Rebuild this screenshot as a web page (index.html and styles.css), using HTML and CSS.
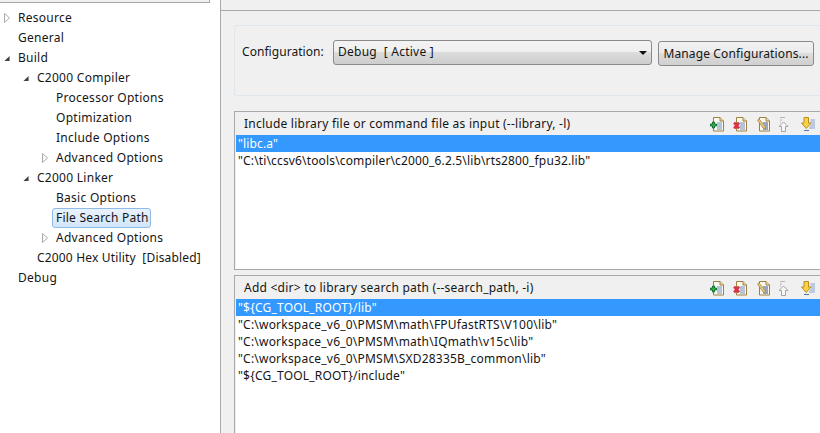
FILE: index.html
```html
<!DOCTYPE html>
<html lang="en">
<head>
<meta charset="utf-8">
<title>Build settings</title>
<link rel="stylesheet" href="styles.css">
</head>
<body>
<svg class="defs" width="0" height="0" aria-hidden="true">
  <symbol id="page" viewBox="0 0 15 15">
    <path d="M3.500.5H10L13.500 4V14H3.500Z" fill="#fbf9ee" stroke="#9c8040"/>
    <path d="M10 .5V4H13.500" fill="#eadcb0" stroke="#9c8040"/>
    <path d="M7 6H12M7 8H12M7 10H12M7 12H12" stroke="#6f8fc4"/>
  </symbol>
  <symbol id="add" viewBox="0 0 15 15">
    <use href="#page"/>
    <path d="M2.500 5H4.500V7H6.500V9H4.500V11H2.500V9H.5V7H2.500Z" fill="#35b04f" stroke="#0d6b2a" stroke-width=".9"/>
  </symbol>
  <symbol id="del" viewBox="0 0 15 15">
    <use href="#page"/>
    <path d="M.5 6.500L2 5L3.500 6.500L5 5L6.800 6.500L5.300 8.500L6.800 10.500L5 12L3.500 10.500L2 12L.5 10.500L2 8.500Z" fill="#e0304a" stroke="#cf2a3c" stroke-width=".5"/>
  </symbol>
  <symbol id="edit" viewBox="0 0 15 15">
    <path d="M2.500.5H9L12.500 4V14H2.500Z" fill="#fbf9ee" stroke="#9c8040"/>
    <path d="M9 .5V4H12.500" fill="#eadcb0" stroke="#9c8040"/>
    <path d="M6 6H11M7 8H11M8 10H11M6 12H11" stroke="#34558f"/>
    <path d="M.5 3L2 1.800L8 9.500L8.500 12L6 11Z" fill="#ecc87c" stroke="#a58a4e" stroke-width=".8"/>
  </symbol>
  <symbol id="up" viewBox="0 0 10 15">
    <path d="M4.500 5L9 9.500H6.500V14.500H2.500V9.500H0Z" fill="#f6f6f6" stroke="#a4a4a4"/>
    <path d="M1 .5H6M1 3H3M1 5H2" stroke="#b4b4b4"/>
  </symbol>
  <symbol id="down" viewBox="0 0 15 15">
    <path d="M3 .5H7.500V6H10L5.250 11.500L.5 6H3Z" fill="#fad24a" stroke="#bc8a1c"/>
    <path d="M9.500 3H14M9.500 5H14M10 7H14M9 9H14M8 11H14" stroke="#8aa2cc"/>
    <path d="M3 13.500H8" stroke="#4d75b5"/>
  </symbol>
</svg>

<div class="app">
  <nav class="tree">
    <div class="tree-top"></div>
    <ul class="rows">
      <li class="row"><svg class="twist" viewBox="0 0 6 10"><path d="M.5.5L5.500 5L.5 9.500Z" fill="#fff" stroke="#a9a9a9"/></svg><span class="label">Resource</span></li>
      <li class="row"><span class="twist"></span><span class="label">General</span></li>
      <li class="row"><svg class="twist open" viewBox="0 0 7 7"><path d="M6.500.5V6.500H.5Z" fill="#404040"/></svg><span class="label">Build</span></li>
      <li class="row l2"><svg class="twist open" viewBox="0 0 7 7"><path d="M6.500.5V6.500H.5Z" fill="#404040"/></svg><span class="label">C2000 Compiler</span></li>
      <li class="row l3"><span class="twist"></span><span class="label">Processor Options</span></li>
      <li class="row l3"><span class="twist"></span><span class="label">Optimization</span></li>
      <li class="row l3"><span class="twist"></span><span class="label">Include Options</span></li>
      <li class="row l3"><svg class="twist" viewBox="0 0 6 10"><path d="M.5.5L5.500 5L.5 9.500Z" fill="#fff" stroke="#a9a9a9"/></svg><span class="label">Advanced Options</span></li>
      <li class="row l2"><svg class="twist open" viewBox="0 0 7 7"><path d="M6.500.5V6.500H.5Z" fill="#404040"/></svg><span class="label">C2000 Linker</span></li>
      <li class="row l3"><span class="twist"></span><span class="label">Basic Options</span></li>
      <li class="row l3"><span class="twist"></span><span class="label selected">File Search Path</span></li>
      <li class="row l3"><svg class="twist" viewBox="0 0 6 10"><path d="M.5.5L5.500 5L.5 9.500Z" fill="#fff" stroke="#a9a9a9"/></svg><span class="label">Advanced Options</span></li>
      <li class="row l2"><span class="twist"></span><span class="label hex">C2000 Hex Utility&nbsp; [Disabled]</span></li>
      <li class="row"><span class="twist"></span><span class="label">Debug</span></li>
    </ul>
  </nav>

  <main class="content">
    <div class="top-strip"></div>
    <section class="config">
      <span class="config-label">Configuration:</span>
      <div class="combo"><span>Debug&nbsp; [ Active ]</span><span class="caret"></span></div>
      <button class="manage" type="button">Manage Configurations...</button>
    </section>

    <section class="panel first">
      <header class="panel-head">
        <span class="panel-title">Include library file or command file as input (--library, -l)</span>
        <div class="tools">
          <svg class="tool"><use href="#add"/></svg>
          <svg class="tool"><use href="#del"/></svg>
          <svg class="tool"><use href="#edit"/></svg>
          <svg class="tool narrow"><use href="#up"/></svg>
          <span class="sep"></span>
          <svg class="tool"><use href="#down"/></svg>
        </div>
      </header>
      <ul class="list">
        <li class="item active">"libc.a"</li>
        <li class="item">"C:\ti\ccsv6\tools\compiler\c2000_6.2.5\lib\rts2800_fpu32.lib"</li>
      </ul>
    </section>

    <section class="panel second">
      <header class="panel-head">
        <span class="panel-title">Add &lt;dir&gt; to library search path (--search_path, -i)</span>
        <div class="tools">
          <svg class="tool"><use href="#add"/></svg>
          <svg class="tool"><use href="#del"/></svg>
          <svg class="tool"><use href="#edit"/></svg>
          <svg class="tool narrow"><use href="#up"/></svg>
          <span class="sep"></span>
          <svg class="tool"><use href="#down"/></svg>
        </div>
      </header>
      <ul class="list wide">
        <li class="item active">"${CG_TOOL_ROOT}/lib"</li>
        <li class="item">"C:\workspace_v6_0\PMSM\math\FPUfastRTS\V100\lib"</li>
        <li class="item">"C:\workspace_v6_0\PMSM\math\IQmath\v15c\lib"</li>
        <li class="item">"C:\workspace_v6_0\PMSM\SXD28335B_common\lib"</li>
        <li class="item">"${CG_TOOL_ROOT}/include"</li>
      </ul>
    </section>
  </main>
</div>
</body>
</html>
```

FILE: styles.css
```css
* { box-sizing: border-box; }
html, body { margin: 0; padding: 0; }
body {
  width: 820px;
  height: 433px;
  overflow: hidden;
  font: 12px/16px "Noto Sans", sans-serif;
  color: #151515;
  background: #fff;
}
.defs { display: block; width: 0; height: 0; }
ul { list-style: none; margin: 0; padding: 0; }

.app { display: flex; width: 820px; height: 433px; }

/* Tree */
.tree {
  width: 221px;
  flex: none;
  background: #fff;
  border-right: 1px solid #a8a8a8;
}
.tree-top {
  width: 210px;
  height: 3px;
  background: #f0f0f0;
  border-right: 1px solid #a8a8a8;
  border-bottom: 1px solid #a8a8a8;
}
.rows { padding-top: 5px; }
.row { display: flex; align-items: center; height: 20px; padding-left: 4px; }
.l2 { padding-left: 23px; }
.l3 { padding-left: 42px; }
.twist { width: 6px; height: 10px; margin-right: 8px; flex: none; }
.twist.open { height: 7px; }
.label { white-space: nowrap; letter-spacing: .27px; }
.hex { letter-spacing: .17px; }
.selected {
  margin-left: -4px;
  padding: 1px 4px 1px 3px;
  height: 20px;
  width: 99px;
  letter-spacing: .22px;
  border: 1px solid #8fbbe9;
  border-radius: 3px;
  background: linear-gradient(#e9f3fd, #d2e6fa);
}

/* Content */
.content { flex: 1; min-width: 0; background: #f0f0f0; }
.top-strip { height: 11px; border-bottom: 1px solid #a8a8a8; }

.config {
  display: flex;
  align-items: flex-start;
  height: 71px;
  margin: 14px 0 15px 13px;
  padding: 14px 0 0 7px;
  border: 1px solid #dfe6ec;
  border-right: 0;
  border-radius: 3px 0 0 3px;
  background: #f0f0f0;
}
.config-label { width: 91px; flex: none; line-height: 24px; letter-spacing: .05px; }
.combo {
  display: flex;
  align-items: center;
  justify-content: space-between;
  width: 319px;
  height: 25px;
  padding: 0 4px 2px 4px;
  border: 1px solid #8a8a8a;
  border-radius: 3px;
  background: linear-gradient(#f3f3f3 0, #f0f0f0 45%, #dcdcdc 50%, #cdcdcd 100%);
  letter-spacing: .25px;
}
.caret {
  width: 0;
  height: 0;
  border-left: 4px solid transparent;
  border-right: 4px solid transparent;
  border-top: 4px solid #111;
  margin: 2px 0 0 0;
}
.manage {
  width: 156px;
  height: 25px;
  margin: 1px 0 0 6px;
  padding: 0;
  font: inherit;
  letter-spacing: .12px;
  color: #151515;
  border: 1px solid #8a8a8a;
  border-radius: 3px;
  background: linear-gradient(#f2f2f2 0, #ececec 45%, #dddddd 50%, #cfcfcf 100%);
}

.panel {
  display: flex;
  flex-direction: column;
  margin-left: 13px;
  border: 1px solid #a8a8a8;
  border-right: 0;
  background: #f0f0f0;
}
.first { height: 159px; margin-bottom: 5px; }
.second { height: 160px; border-bottom: 0; }
.panel-head { display: flex; align-items: center; height: 23px; padding-left: 9px; flex: none; }
.panel-title { flex: 1; letter-spacing: .23px; }
.tools { display: flex; align-items: center; width: 110px; height: 23px; }
.tool { width: 15px; height: 15px; margin: 1px 8px 0 0; flex: none; }
.tool:nth-child(2) { margin-right: 9px; }
.tool:nth-child(3) { margin-right: 7px; }
.narrow { width: 10px; margin-right: 0; }
.sep { width: 1px; height: 12px; background: #a9a9a9; margin: 0 9px 2px 3px; }
.list { flex: 1; margin-left: 1px; background: #fff; }
.item { height: 17px; padding-left: 2px; line-height: 17px; white-space: nowrap; color: #151515; letter-spacing: .15px; }
.wide .item { letter-spacing: .21px; }
.active { background: #3399ff; color: #fff; }
```
